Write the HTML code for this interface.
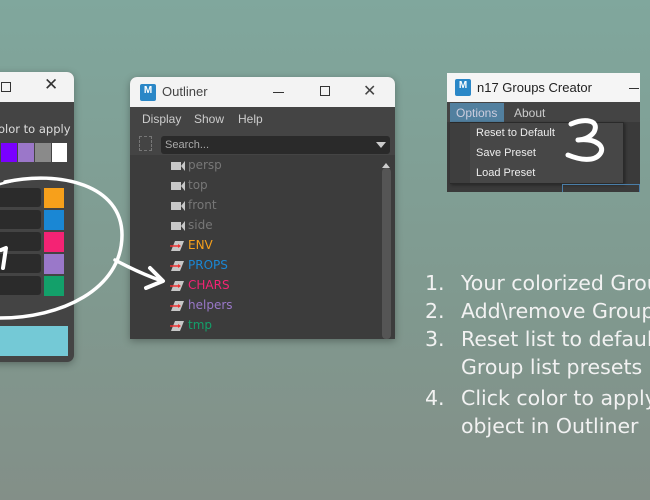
<!DOCTYPE html>
<html><head><style>
*{margin:0;padding:0;box-sizing:border-box}
html,body{width:650px;height:500px;overflow:hidden}
body{position:relative;background:linear-gradient(180deg,#80a79d 0%,#80998f 60%,#838f88 100%);font-family:"Liberation Sans","DejaVu Sans",sans-serif}
.a{position:absolute}
.win{background:#444;border-radius:7px;overflow:hidden;box-shadow:0 2px 8px rgba(0,0,0,.3)}
.tb{position:absolute;left:0;right:0;top:0;background:#f3f3f3;color:#333}
.t{font-size:11px;color:#ccc}
.row{position:absolute;left:0;font-size:12px}
.list{font-family:"DejaVu Sans",sans-serif}
.big{font-family:"DejaVu Sans",sans-serif;font-size:20.5px;color:#f2f2f2;position:absolute;white-space:nowrap}
.clip{position:absolute;left:0;top:0;width:650px;height:500px;overflow:hidden}
</style></head><body>
<div class="clip">

<div class="a win" style="left:-10px;top:72px;width:84px;height:290px">
 <div class="tb" style="height:30px">
  <div class="a" style="left:11px;top:10px;width:10px;height:10px;border:1px solid #333"></div>
  <div class="a" style="left:54px;top:3px;font-size:17px;color:#333">✕</div>
 </div>
 <div class="a t" style="left:8px;top:50px;font-size:11.5px;color:#ddd;font-family:'DejaVu Sans',sans-serif">olor to apply</div>
 <div class="a" style="left:11px;top:71px;width:16px;height:19px;background:#7a00ff"></div>
 <div class="a" style="left:28px;top:71px;width:16px;height:19px;background:#9b77c9"></div>
 <div class="a" style="left:45px;top:71px;width:16px;height:19px;background:#8a8a8a"></div>
 <div class="a" style="left:62px;top:71px;width:15px;height:19px;background:#fff"></div>
 <div class="a" style="left:0;top:116px;width:51px;height:19px;background:#2b2b2b;border-radius:3px"></div>
 <div class="a" style="left:0;top:138px;width:51px;height:19px;background:#2b2b2b;border-radius:3px"></div>
 <div class="a" style="left:0;top:160px;width:51px;height:19px;background:#2b2b2b;border-radius:3px"></div>
 <div class="a" style="left:0;top:182px;width:51px;height:19px;background:#2b2b2b;border-radius:3px"></div>
 <div class="a" style="left:0;top:204px;width:51px;height:19px;background:#2b2b2b;border-radius:3px"></div>
 <div class="a" style="left:54px;top:116px;width:20px;height:20px;background:#f7a01b"></div>
 <div class="a" style="left:54px;top:138px;width:20px;height:20px;background:#1a87d4"></div>
 <div class="a" style="left:54px;top:160px;width:20px;height:20px;background:#f42374"></div>
 <div class="a" style="left:54px;top:182px;width:20px;height:20px;background:#9a78c9"></div>
 <div class="a" style="left:54px;top:204px;width:20px;height:20px;background:#13a06a"></div>
 <div class="a" style="left:0;top:254px;width:78px;height:30px;background:#74c9d6"></div>
</div>

<div class="a win" style="left:130px;top:77px;width:265px;height:262px;background:#3c3c3c;border-radius:7px 7px 0 0">
 <div class="tb" style="height:30px">
  <div class="a" style="left:10px;top:7px;width:16px;height:17px;background:#2a87c7;border-radius:2px;color:#fff;font-size:10px;font-weight:bold;text-align:center;line-height:13px">M</div>
  <div class="a" style="left:32px;top:7px;font-size:13px;color:#444">Outliner</div>
  <div class="a" style="left:143px;top:15px;width:11px;height:1px;background:#333"></div>
  <div class="a" style="left:190px;top:9px;width:10px;height:10px;border:1px solid #333"></div>
  <div class="a" style="left:233px;top:4px;font-size:16px;color:#444">✕</div>
 </div>
 <div class="a" style="left:0;top:30px;width:265px;height:24px;background:#444"></div>
 <div class="a t" style="left:12px;top:35px;font-size:12px">Display</div>
 <div class="a t" style="left:64px;top:35px;font-size:12px">Show</div>
 <div class="a t" style="left:108px;top:35px;font-size:12px">Help</div>
 <div class="a" style="left:0;top:54px;width:265px;height:24px;background:#444"></div>
 <div class="a" style="left:9px;top:59px;width:13px;height:15px;border:1px dashed #777"></div>
 <div class="a" style="left:31px;top:59px;width:229px;height:18px;background:#2a2a2a;border-radius:3px;font-size:11px;color:#aaa;padding:3px 4px">Search...</div>
 <div class="a" style="left:246px;top:65px;border:5px solid transparent;border-top:6px solid #ccc"></div>
 <div class="a" style="left:252px;top:91px;width:9px;height:171px;background:#555;border-radius:4px"></div>
 <div class="a" style="left:252px;top:82px;border:4px solid transparent;border-bottom:5px solid #ccc"></div>
 <div class="list">
  <div class="a" style="left:41px;top:85px;width:10px;height:8px;background:#c8c8c8;box-shadow:0 20px #c8c8c8,0 40px #c8c8c8,0 60px #c8c8c8"></div>
  <div class="a" style="left:51px;top:84px;border:5px solid transparent;border-right:4px solid #c8c8c8;border-left:0"></div>
  <div class="a" style="left:51px;top:104px;border:5px solid transparent;border-right:4px solid #c8c8c8;border-left:0"></div>
  <div class="a" style="left:51px;top:124px;border:5px solid transparent;border-right:4px solid #c8c8c8;border-left:0"></div>
  <div class="a" style="left:51px;top:144px;border:5px solid transparent;border-right:4px solid #c8c8c8;border-left:0"></div>
  <div class="row" style="left:58px;top:81px;color:#777">persp</div>
  <div class="row" style="left:58px;top:101px;color:#777">top</div>
  <div class="row" style="left:58px;top:121px;color:#777">front</div>
  <div class="row" style="left:58px;top:141px;color:#777">side</div>
  <svg class="a" style="left:40px;top:162px" width="16" height="100">
   <g id="gi"><path d="M5 2h9l-4 10H1z" fill="#c8c8c8"/><path d="M0 7h10" stroke="#e33" stroke-width="1.5"/><path d="M8 5l3 2-3 2" fill="#e33"/></g>
   <use href="#gi" y="20"/><use href="#gi" y="40"/><use href="#gi" y="60"/><use href="#gi" y="80"/>
  </svg>
  <div class="row" style="left:58px;top:161px;color:#f7a01b">ENV</div>
  <div class="row" style="left:58px;top:181px;color:#1a87d4">PROPS</div>
  <div class="row" style="left:58px;top:201px;color:#f42374">CHARS</div>
  <div class="row" style="left:58px;top:221px;color:#9a78c9">helpers</div>
  <div class="row" style="left:58px;top:241px;color:#13a06a">tmp</div>
 </div>
</div>

<div class="a" style="left:447px;top:73px;width:193px;height:119px;background:#3a3a3a">
 <div class="tb" style="height:29px;background:#f5f5f5">
  <div class="a" style="left:8px;top:6px;width:16px;height:17px;background:#2a87c7;border-radius:2px;color:#fff;font-size:10px;font-weight:bold;text-align:center;line-height:13px">M</div>
  <div class="a" style="left:30px;top:7px;font-size:13px;color:#222">n17 Groups Creator</div>
  <div class="a" style="left:182px;top:15px;width:10px;height:1px;background:#333"></div>
 </div>
 <div class="a" style="left:0;top:29px;width:193px;height:20px;background:#444"></div>
 <div class="a" style="left:3px;top:30px;width:54px;height:19px;background:#52809f;font-size:12px;color:#ccd;padding:3px 0 0 6px">Options</div>
 <div class="a t" style="left:67px;top:33px;font-size:12px">About</div>
 <div class="a" style="left:3px;top:49px;width:174px;height:62px;background:#474747;border:1px solid #2a2a2a;box-shadow:1px 1px 3px rgba(0,0,0,.4)"></div>
 <div class="a" style="left:3px;top:50px;width:20px;height:60px;background:#3e3e3e"></div>
 <div class="a t" style="left:29px;top:54px;color:#eee">Reset to Default</div>
 <div class="a t" style="left:29px;top:74px;color:#eee">Save Preset</div>
 <div class="a t" style="left:29px;top:94px;color:#eee">Load Preset</div>
 <div class="a" style="left:115px;top:111px;width:78px;height:8px;border:1px solid #4a7ea8;border-bottom:0"></div>
</div>

<svg class="a" style="left:0;top:0" width="650" height="500">
 <g fill="none" stroke="#fff" stroke-linecap="round" stroke-linejoin="round">
  <path d="M5 182 C60 170 122 185 122 235 C122 290 60 318 0 318" stroke-width="3.5"/>
  <path d="M17 180 C12 181 4 183 0 184" stroke-width="2.5"/>
  <path d="M115 260 C130 268 145 275 162 281" stroke-width="3.5"/>
  <path d="M150 268 L163 281 L146 288" stroke-width="4"/>
  <path d="M1 250 L6 248 L3 268" stroke-width="4"/>
  <path d="M571 124 C585 118 600 120 594 132 C590 138 582 140 578 140 C595 138 606 146 600 154 C594 162 580 160 568 155" stroke-width="5"/>
 </g>
</svg>

<div class="a" style="left:420px;top:265px;width:230px;height:180px;overflow:hidden">
<div class="big" style="left:5px;top:6px">1.</div><div class="big" style="left:41px;top:6px">Your colorized Groups</div>
<div class="big" style="left:5px;top:34px">2.</div><div class="big" style="left:41px;top:34px">Add\remove Groups</div>
<div class="big" style="left:5px;top:62px">3.</div><div class="big" style="left:41px;top:62px">Reset list to default</div>
<div class="big" style="left:41px;top:90px">Group list presets</div>
<div class="big" style="left:5px;top:121px">4.</div><div class="big" style="left:41px;top:121px">Click color to apply</div>
<div class="big" style="left:41px;top:149px">object in Outliner</div>
</div>
</div>
</body></html>
